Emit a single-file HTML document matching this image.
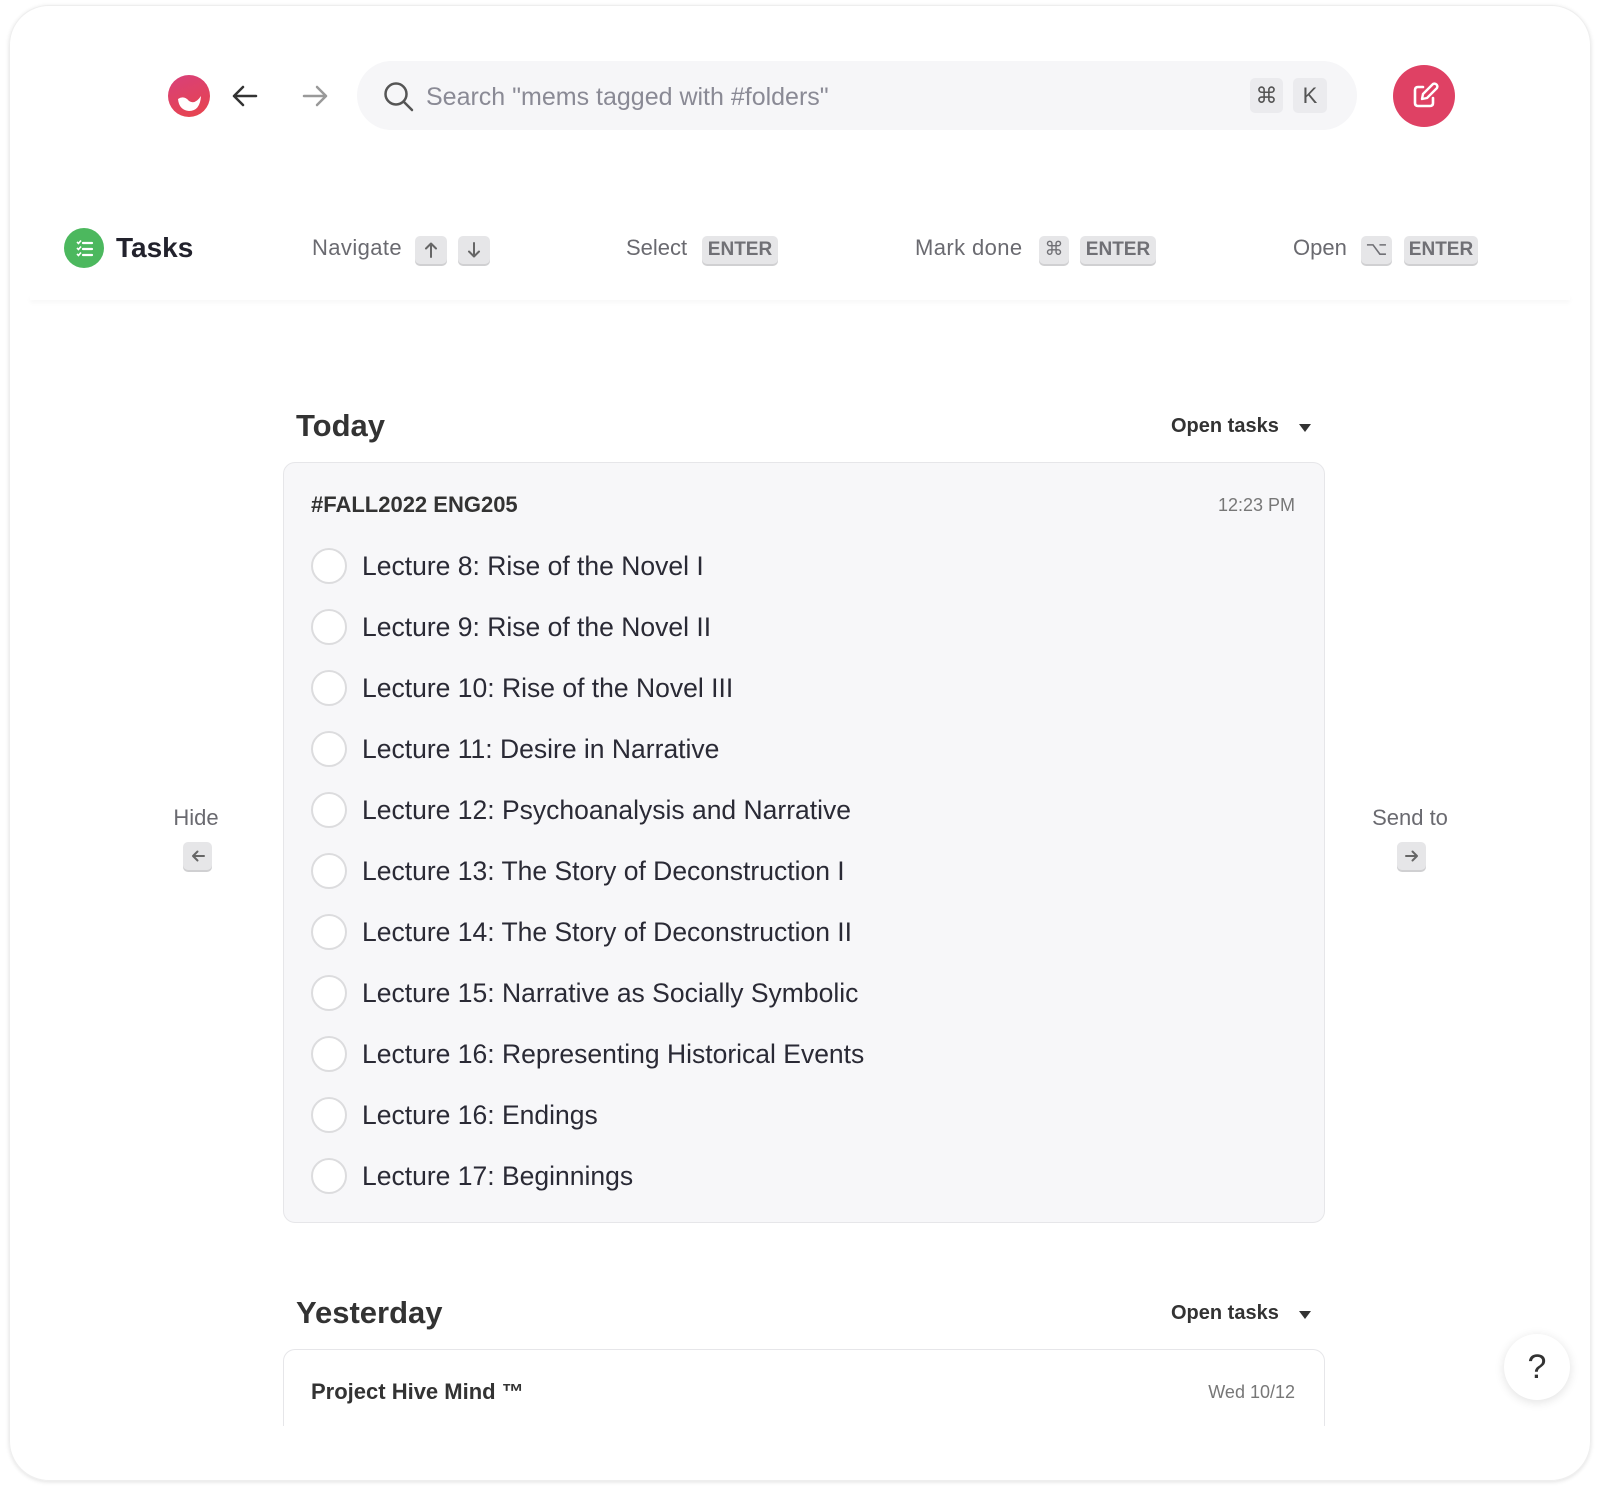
<!DOCTYPE html>
<html><head><meta charset="utf-8"><style>
*{box-sizing:border-box;margin:0;padding:0}
body{width:1600px;height:1492px;background:#fff;font-family:"Liberation Sans",sans-serif;position:relative;overflow:hidden;color:#2a2a35}
.a{position:absolute}
.frame{left:9px;top:5px;width:1582px;height:1476px;border-radius:40px;box-shadow:0 1px 4px rgba(0,0,0,.12);border:1px solid #eee}
.k{position:absolute;height:28px;border-radius:5px;background:#e6e6e8;box-shadow:0 2px 0 #d0d0d2;color:#707075;font-weight:bold;font-size:19px;text-align:center;line-height:28px}
.k svg{display:block;margin:0 auto}
.lbl{position:absolute;font-size:22px;color:#6a6a70;line-height:28px}
.it{position:absolute;left:311px;height:36px;width:900px}
.it .c{position:absolute;left:0;top:0;width:36px;height:36px;border-radius:50%;border:2.5px solid #dcdcde;background:#fff}
.it .t{position:absolute;left:51px;top:0;line-height:36px;font-size:26.5px;color:#2a2a35;white-space:nowrap}
.h{position:absolute;font-weight:bold;font-size:31px;color:#333}
.ot{position:absolute;font-weight:bold;font-size:20px;color:#333}
</style></head><body>
<div class="a frame"></div>
<div class="a" style="left:168px;top:75px;width:42px;height:42px;border-radius:50%;background:linear-gradient(160deg,#d8407a,#e8444c)"></div>
<svg class="a" style="left:168px;top:75px" width="42" height="42"><path d="M10 24 Q16 20 21 26 Q27 30 33 21 Q32 36 21 36 Q11 35 10 24Z" fill="#fff"/></svg>
<svg class="a" style="left:230px;top:82px" width="30" height="28"><path d="M26 14H4M13 5L4 14L13 23" stroke="#333" stroke-width="2.5" fill="none" stroke-linecap="round" stroke-linejoin="round"/></svg>
<svg class="a" style="left:300px;top:82px" width="30" height="28"><path d="M4 14H26M17 5L26 14L17 23" stroke="#999" stroke-width="2.5" fill="none" stroke-linecap="round" stroke-linejoin="round"/></svg>
<div class="a" style="left:357px;top:61px;width:1000px;height:69px;border-radius:35px;background:#f6f6f8"></div>
<svg class="a" style="left:382px;top:80px" width="34" height="34"><circle cx="14" cy="14" r="10.5" stroke="#555" stroke-width="2.5" fill="none"/><path d="M22 22L30 30" stroke="#555" stroke-width="2.5" stroke-linecap="round"/></svg>
<div class="a" style="left:426px;top:80px;font-size:25px;color:#8a8a95;line-height:34px">Search "mems tagged with #folders"</div>
<div class="a" style="left:1250px;top:78px;width:33px;height:35px;border-radius:5px;background:#ebebee;color:#555;font-size:22px;text-align:center;line-height:35px">⌘</div>
<div class="a" style="left:1293px;top:78px;width:34px;height:35px;border-radius:5px;background:#ebebee;color:#555;font-size:22px;text-align:center;line-height:35px">K</div>
<div class="a" style="left:1393px;top:65px;width:62px;height:62px;border-radius:50%;background:#df4164"></div>
<svg class="a" style="left:1409px;top:80px" width="32" height="32"><path d="M14 7H9Q6 7 6 10V23Q6 26 9 26H21Q24 26 24 23V18" stroke="#fff" stroke-width="2.6" fill="none" stroke-linecap="round"/><path d="M13 19L14 14L24 4Q26 3 27.5 4.5Q29 6 28 8L18 18Z" stroke="#fff" stroke-width="2.4" fill="none" stroke-linejoin="round"/></svg>
<div class="a" style="left:30px;top:294px;width:1540px;height:6px;box-shadow:0 3px 5px rgba(0,0,0,.03)"></div>
<div class="a" style="left:64px;top:228px;width:40px;height:40px;border-radius:50%;background:#4cb85e"></div>
<svg class="a" style="left:64px;top:228px" width="40" height="40"><path d="M13 14l1.5 1.5 2.5-3M13 20l1.5 1.5 2.5-3M13 26l1.5 1.5 2.5-3" stroke="#fff" stroke-width="1.6" fill="none"/><path d="M19 15H28M19 21H28M19 27H28" stroke="#fff" stroke-width="2.2" stroke-linecap="round"/></svg>
<div class="a" style="left:116px;top:230px;font-size:28px;font-weight:bold;color:#22222c;line-height:36px">Tasks</div>
<div class="lbl" style="left:312px;top:234px;letter-spacing:.4px">Navigate</div>
<div class="k" style="left:415px;top:236px;width:32px"><svg width="14" height="28"><path d="M7 21V8M2 12.5L7 7.5L12 12.5" stroke="#666" stroke-width="2" fill="none" stroke-linecap="round" stroke-linejoin="round"/></svg></div>
<div class="k" style="left:458px;top:236px;width:32px"><svg width="14" height="28"><path d="M7 7V20M2 15.5L7 20.5L12 15.5" stroke="#666" stroke-width="2" fill="none" stroke-linecap="round" stroke-linejoin="round"/></svg></div>
<div class="lbl" style="left:626px;top:234px">Select</div>
<div class="k" style="left:702px;top:236px;width:76px">ENTER</div>
<div class="lbl" style="left:915px;top:234px;letter-spacing:.4px">Mark done</div>
<div class="k" style="left:1039px;top:236px;width:30px;font-weight:normal">⌘</div>
<div class="k" style="left:1080px;top:236px;width:76px">ENTER</div>
<div class="lbl" style="left:1293px;top:234px">Open</div>
<div class="k" style="left:1361px;top:236px;width:31px;font-weight:normal">⌥</div>
<div class="k" style="left:1404px;top:236px;width:74px">ENTER</div>
<div class="h" style="left:296px;top:408px">Today</div>
<div class="ot" style="left:1171px;top:415px">Open tasks</div>
<svg class="a" style="left:1298px;top:423px" width="14" height="10"><path d="M1 1H13L7 9Z" fill="#333"/></svg>
<div class="a" style="left:283px;top:462px;width:1042px;height:761px;border-radius:12px;background:#f7f7f9;border:1px solid #e6e6e9"></div>
<div class="a" style="left:311px;top:492px;font-size:22px;font-weight:bold;color:#333">#FALL2022 ENG205</div>
<div class="a" style="left:1180px;top:495px;width:115px;text-align:right;font-size:18px;color:#777">12:23 PM</div>
<div class="it" style="top:548px"><div class="c"></div><div class="t">Lecture 8: Rise of the Novel I</div></div>
<div class="it" style="top:609px"><div class="c"></div><div class="t">Lecture 9: Rise of the Novel II</div></div>
<div class="it" style="top:670px"><div class="c"></div><div class="t">Lecture 10: Rise of the Novel III</div></div>
<div class="it" style="top:731px"><div class="c"></div><div class="t">Lecture 11: Desire in Narrative</div></div>
<div class="it" style="top:792px"><div class="c"></div><div class="t">Lecture 12: Psychoanalysis and Narrative</div></div>
<div class="it" style="top:853px"><div class="c"></div><div class="t">Lecture 13: The Story of Deconstruction I</div></div>
<div class="it" style="top:914px"><div class="c"></div><div class="t">Lecture 14: The Story of Deconstruction II</div></div>
<div class="it" style="top:975px"><div class="c"></div><div class="t">Lecture 15: Narrative as Socially Symbolic</div></div>
<div class="it" style="top:1036px"><div class="c"></div><div class="t">Lecture 16: Representing Historical Events</div></div>
<div class="it" style="top:1097px"><div class="c"></div><div class="t">Lecture 16: Endings</div></div>
<div class="it" style="top:1158px"><div class="c"></div><div class="t">Lecture 17: Beginnings</div></div>
<div class="lbl" style="left:146px;top:804px;width:100px;text-align:center">Hide</div>
<div class="k" style="left:183px;top:842px;width:29px"><svg width="16" height="28"><path d="M14 14H3M7.5 9.5L3 14L7.5 18.5" stroke="#666" stroke-width="2" fill="none" stroke-linecap="round" stroke-linejoin="round"/></svg></div>
<div class="lbl" style="left:1350px;top:804px;width:120px;text-align:center">Send to</div>
<div class="k" style="left:1397px;top:842px;width:29px"><svg width="16" height="28"><path d="M2 14H13M8.5 9.5L13 14L8.5 18.5" stroke="#666" stroke-width="2" fill="none" stroke-linecap="round" stroke-linejoin="round"/></svg></div>
<div class="h" style="left:296px;top:1295px">Yesterday</div>
<div class="ot" style="left:1171px;top:1302px">Open tasks</div>
<svg class="a" style="left:1298px;top:1310px" width="14" height="10"><path d="M1 1H13L7 9Z" fill="#333"/></svg>
<div class="a" style="left:283px;top:1349px;width:1042px;height:77px;border-radius:12px 12px 0 0;background:#fff;border:1px solid #e6e6e9;border-bottom:none"></div>
<div class="a" style="left:311px;top:1379px;font-size:22px;font-weight:bold;color:#333">Project Hive Mind ™</div>
<div class="a" style="left:1180px;top:1382px;width:115px;text-align:right;font-size:18px;color:#777">Wed 10/12</div>
<div class="a" style="left:1504px;top:1334px;width:66px;height:66px;border-radius:50%;background:#fff;box-shadow:0 2px 10px rgba(0,0,0,.12);text-align:center;line-height:66px;font-size:34px;color:#333">?</div>
</body></html>
